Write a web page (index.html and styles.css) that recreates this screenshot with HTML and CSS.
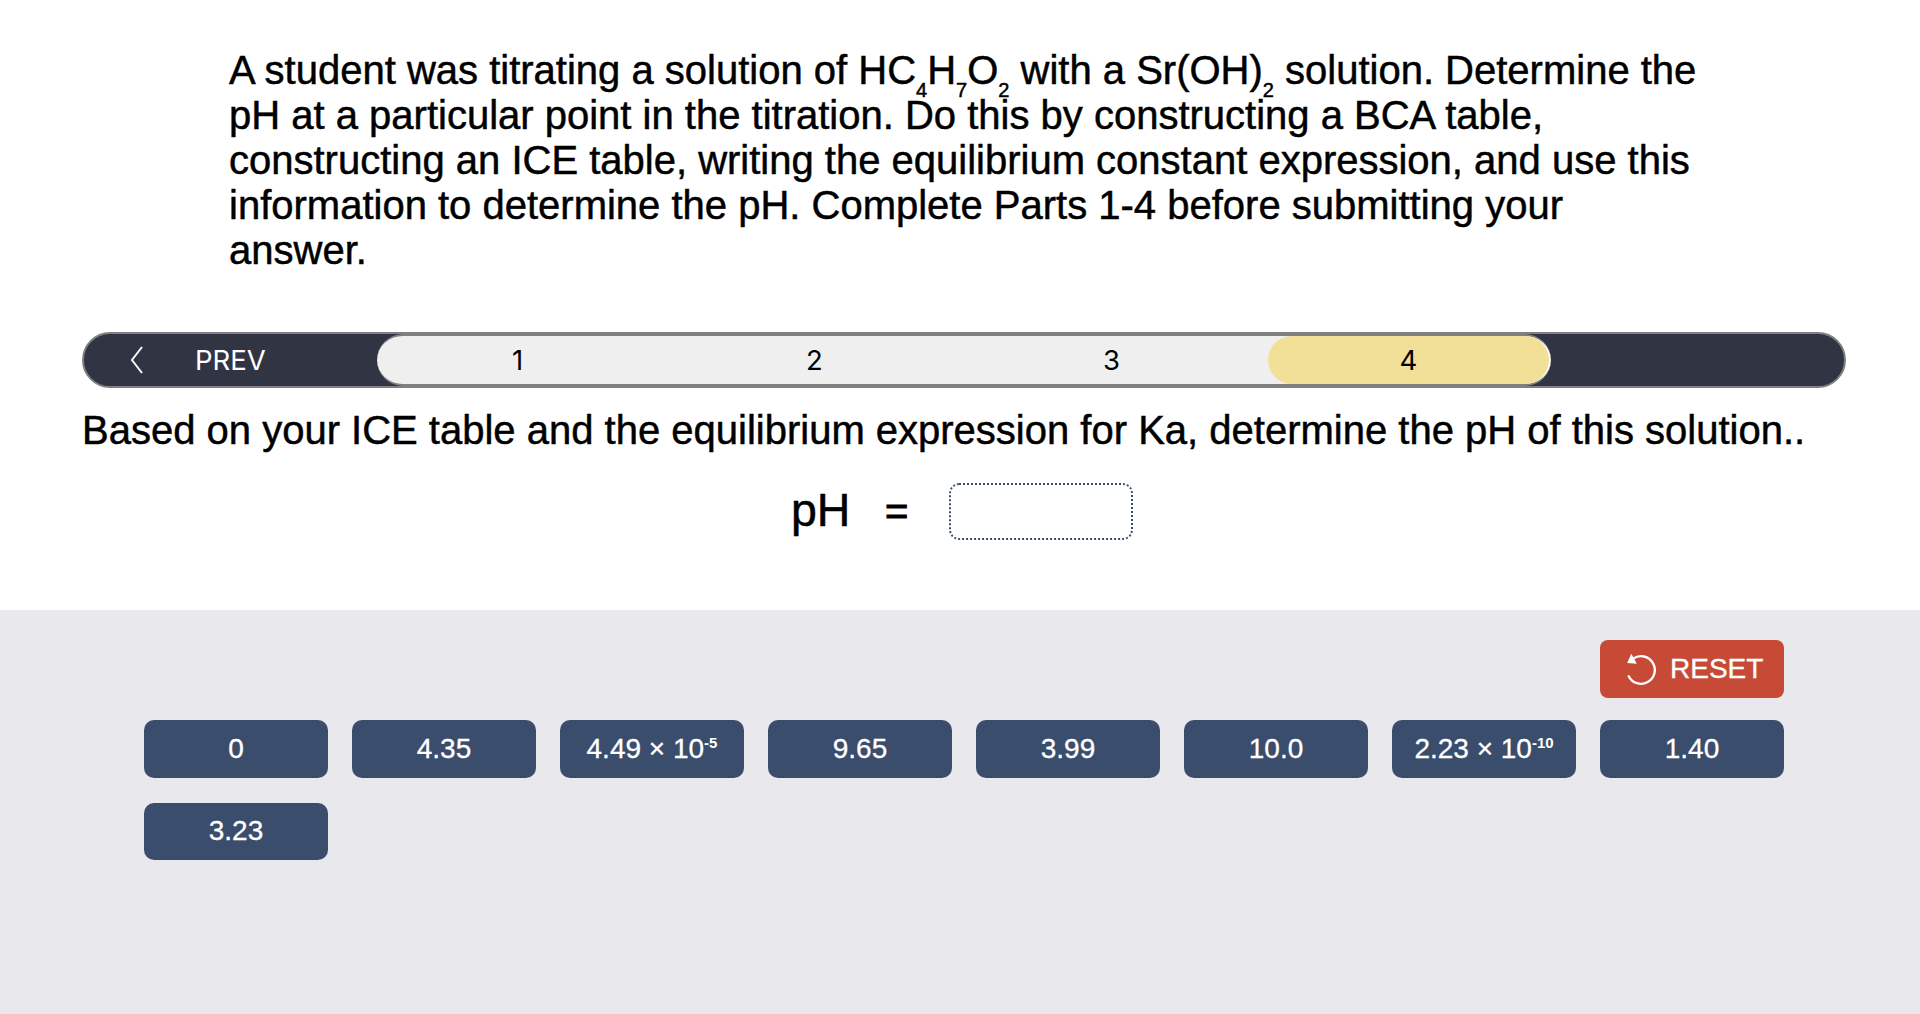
FILE: index.html
```html
<!DOCTYPE html>
<html lang="en">
<head>
	<meta charset="UTF-8">
	<title>Titration</title>
	<link rel="stylesheet" href="styles.css">
</head>
<body>
	<div class="question">
		<p class="prompt">
			<span class="line">A student was titrating a solution of HC<sub>4</sub>H<sub>7</sub>O<sub>2</sub> with a Sr(OH)<sub>2</sub> solution. Determine the</span>
			<span class="line">pH at a particular point in the titration. Do this by constructing a BCA table,</span>
			<span class="line">constructing an ICE table, writing the equilibrium constant expression, and use this</span>
			<span class="line">information to determine the pH. Complete Parts 1-4 before submitting your</span>
			<span class="line">answer.</span>
		</p>
		<div class="nav">
			<button type="button" class="prev">
				<svg class="arrow" width="14" height="30" viewBox="0 0 14 30"><path d="M12 2L2 15L12 28" fill="none" stroke="#fff" stroke-width="2"/></svg>
				<span>PREV</span>
			</button>
			<ul class="steps">
				<li class="step">1</li>
				<li class="step">2</li>
				<li class="step">3</li>
				<li class="step active">4</li>
			</ul>
		</div>
		<p class="part">Based on your ICE table and the equilibrium expression for Ka, determine the pH of this solution..</p>
		<div class="equation">
			<span class="label">pH</span>
			<span class="equals">=</span>
			<div class="drop"></div>
		</div>
	</div>
	<div class="bank">
		<button type="button" class="reset">
			<svg class="icon" width="32" height="34" viewBox="0 0 32 34"><path d="M2.7 24.2A13.8 13.8 0 1 0 7.4 6.5" fill="none" stroke="#fff" stroke-width="2.4" stroke-linecap="round"/><path d="M5.3 1.8L1.2 11L10.8 11.8Z" fill="#fff"/></svg>
			<span>RESET</span>
		</button>
		<ul class="tiles">
			<li class="tile">0</li>
			<li class="tile">4.35</li>
			<li class="tile">4.49 × 10<sup>-5</sup></li>
			<li class="tile">9.65</li>
			<li class="tile">3.99</li>
			<li class="tile">10.0</li>
			<li class="tile">2.23 × 10<sup>-10</sup></li>
			<li class="tile">1.40</li>
			<li class="tile">3.23</li>
		</ul>
	</div>
</body>
</html>
```
FILE: styles.css
```css
*{
	box-sizing: border-box;
}
body{
	margin: 0;
	height: 1014px;
	display: flex;
	flex-direction: column;
	background-color: #fff;
	color: #000;
	font-family: "Liberation Sans", Arial, sans-serif;
	-webkit-text-stroke: .5px;
	overflow: hidden;
}
ul{
	margin: 0;
	padding: 0;
	list-style: none;
}
button{
	border: 0;
	padding: 0;
	color: #fff;
	font-family: inherit;
	cursor: pointer;
}
.question{
	height: 610px;
	padding: 48px 74px 0 82px;
}
.prompt{
	margin: 0 0 0 147px;
	height: 284px;
	font-size: 40px;
	line-height: 45px;
}
.line{
	display: block;
	white-space: nowrap;
}
sub{
	font-size: 20px;
	line-height: 0;
	vertical-align: -13px;
}
.nav{
	height: 56px;
	display: flex;
	border: 2px solid #808080;
	border-radius: 28px;
	background-color: #303443;
	font-family: Inter, sans-serif;
	font-size: 27.5px;
	-webkit-text-stroke: 0;
}
.prev{
	width: 293px;
	display: flex;
	align-items: center;
	padding-left: 46px;
	background: none;
	font-family: inherit;
	font-size: 27.5px;
}
.arrow{
	margin-right: 51px;
}
.steps{
	width: 1174px;
	height: 52px;
	display: flex;
	justify-content: space-between;
	padding-right: 2px;
	border-top: 2px solid #808080;
	border-bottom: 2px solid #808080;
	border-radius: 26px;
	background: linear-gradient(to right, #efefef 1000px, #fff 1000px);
}
.step{
	width: 281px;
	border-radius: 24px;
	line-height: 49px;
	text-align: center;
}
.step.active{
	background-color: #f2df98;
	box-shadow: -24px 0 0 #efefef;
}
.part{
	margin: 20px 0 0;
	font-size: 40px;
	line-height: 45px;
	white-space: nowrap;
}
.equation{
	display: flex;
	align-items: center;
	margin: 30px 0 0 709px;
	height: 56px;
}
.label{
	width: 94px;
	padding-bottom: 2px;
	font-size: 46.5px;
}
.equals{
	width: 64px;
	font-size: 40px;
	-webkit-text-stroke: 1px;
}
.drop{
	width: 184px;
	height: 57px;
	border: 2px dotted #3b4d6c;
	border-radius: 10px;
}
.bank{
	flex: 1;
	padding: 30px 136px 0 144px;
	background-color: #e9e8ed;
	font-size: 28px;
}
.reset{
	width: 184px;
	height: 58px;
	display: flex;
	align-items: center;
	margin-left: auto;
	padding: 0 0 1px 26px;
	border-radius: 8px;
	background-color: #c74a37;
	font-size: 28px;
	-webkit-text-stroke: .3px;
}
.icon{
	margin-right: 12px;
}
.tiles{
	display: grid;
	grid-template-columns: repeat(8, 184px);
	grid-template-rows: 58px 57px;
	gap: 25px 24px;
	margin-top: 22px;
}
.tile{
	border-radius: 10px;
	background-color: #3b4d6c;
	color: #fff;
	line-height: 57px;
	text-align: center;
	white-space: nowrap;
	-webkit-text-stroke: .3px;
}
.tile:last-child{
	line-height: 55px;
}
sup{
	font-size: 15px;
	line-height: 0;
	vertical-align: 10px;
	font-weight: bold;
	-webkit-text-stroke: 0;
}
```
